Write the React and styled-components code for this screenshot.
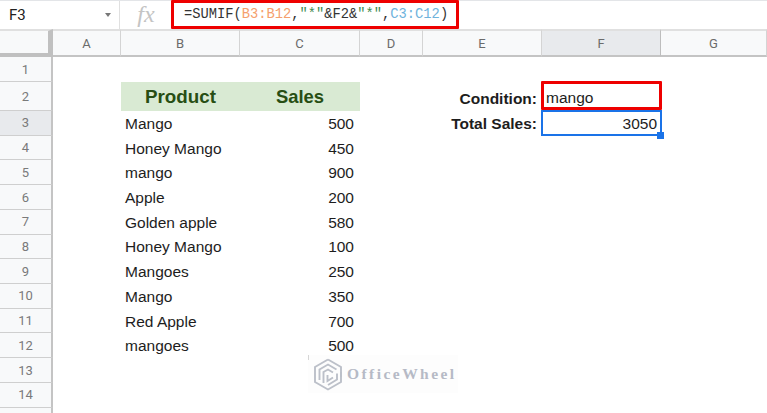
import React from 'react';
import styled, { createGlobalStyle } from 'styled-components';

const GlobalStyle = createGlobalStyle`
  html, body { margin: 0; padding: 0; background: #fff; overflow: hidden; }
  body { font-family: "Liberation Sans", Arial, sans-serif; }
`;

const Page = styled.div`
  width: 767px;
  height: 413px;
  overflow: hidden;
  position: relative;
  background: #fff;
`;

const FormulaBar = styled.div`
  height: 29px;
  box-sizing: border-box;
  border-top: 1px solid #e3e5e8;
  display: flex;
  align-items: center;
  background: #fff;
`;
const NameBox = styled.div`
  width: 120px;
  height: 100%;
  box-sizing: border-box;
  padding-left: 9px;
  display: flex;
  align-items: center;
  justify-content: space-between;
  border-right: 1px solid #e0e0e0;
  font: 15px Roboto, sans-serif;
  color: #222;
`;
const Caret = styled.span`
  width: 0;
  height: 0;
  margin-right: 8px;
  border-left: 3.5px solid transparent;
  border-right: 3.5px solid transparent;
  border-top: 4px solid #777;
`;
const FxLabel = styled.div`
  width: 52px;
  text-align: center;
  font: italic 24px "Liberation Serif", serif;
  color: #c4c4c4;
  margin-top: -2px;
`;
const FormulaBox = styled.div`
  width: 288px;
  height: 29px;
  margin-left: -1px;
  margin-top: -1px;
  box-sizing: border-box;
  border: 3px solid #ee0000;
  border-radius: 1px;
  padding-left: 10px;
  display: flex;
  align-items: center;
  font: 13.75px "Liberation Mono", monospace;
  color: #333;
  white-space: pre;
`;
const Ref = styled.span`
  color: ${p => p.$color};
`;

const Grid = styled.div`
  display: grid;
  grid-template-columns: 53px 68px 119px 120px 63px 119px 119px 106px;
  grid-template-rows: 28px 25px 29px repeat(13, 24.72px);
  font-size: 15.5px;
  color: #1d1d1d;
`;
const Corner = styled.div`
  background: #f8f9fa;
  border-right: 5px solid #c0c0c0;
  border-bottom: 4px solid #c0c0c0;
  border-top: 2px solid #e0e0e0;
`;
const ColHead = styled.div`
  display: flex;
  align-items: center;
  justify-content: center;
  background: ${p => (p.$active ? '#e8eaed' : '#f8f9fa')};
  border-top: 2px solid #e0e0e0;
  border-right: 1px solid ${p => (p.$active ? '#bdbdbd' : '#d4d4d4')};
  border-bottom: 2px solid #c4c4c4;
  box-sizing: border-box;
  font: 13px Roboto, sans-serif;
  color: #6b6b6b;
`;
const RowHead = styled.div`
  display: flex;
  align-items: center;
  justify-content: center;
  background: ${p => (p.$active ? '#e8eaed' : '#f8f9fa')};
  border-right: 2px solid #c4c4c4;
  border-bottom: 1px solid #cfcfcf;
  box-sizing: border-box;
  font: 13px Roboto, sans-serif;
  color: #7a7a7a;
`;
const Cell = styled.div`
  position: relative;
  display: flex;
  align-items: center;
  box-sizing: border-box;
  padding: 1px 5px 0 4px;
  white-space: nowrap;
  justify-content: ${p => (p.$right ? 'flex-end' : 'flex-start')};
  font-weight: ${p => (p.$bold ? 700 : 400)};
`;
const SalesCell = styled(Cell)`
  padding-right: 6px;
`;
const HeaderCell = styled(Cell)`
  justify-content: center;
  padding: 1px 0 0;
  background: #d9ead3;
  color: #274e13;
  font-size: ${p => p.$size}px;
  font-weight: 700;
`;
const LabelCell = styled(Cell)`
  padding-top: 4px;
`;
const RedCell = styled(Cell)`
  padding-top: 3px;
  &::after {
    content: "";
    position: absolute;
    inset: -1px -1px 1px -1px;
    border: 3px solid #ee0000;
    border-radius: 1px;
  }
`;
const ActiveCell = styled(Cell)`
  padding-right: 4px;
  &::before {
    content: "";
    position: absolute;
    inset: -1px -1px 0 -1px;
    border: 2px solid #1a73e8;
  }
  &::after {
    content: "";
    position: absolute;
    right: -3px;
    bottom: -3px;
    width: 7px;
    height: 7px;
    background: #1a73e8;
  }
`;

const Watermark = styled.div`
  position: absolute;
  left: 308px;
  top: 355px;
  width: 150px;
  height: 38px;
  display: flex;
  align-items: center;
  gap: 4px;
  padding-left: 5px;
  box-sizing: border-box;
  background: #fdfdfd;
  &::before {
    content: "";
    position: absolute;
    left: 0;
    top: 0;
    width: 1px;
    height: 5px;
    background: #d6d6d6;
  }
`;
const WatermarkText = styled.span`
  font: 700 15.5px "Liberation Serif", serif;
  letter-spacing: 2.45px;
  color: #b6bac6;
`;

const products = [
  ['Mango', 500],
  ['Honey Mango', 450],
  ['mango', 900],
  ['Apple', 200],
  ['Golden apple', 580],
  ['Honey Mango', 100],
  ['Mangoes', 250],
  ['Mango', 350],
  ['Red Apple', 700],
  ['mangoes', 500],
];
const columns = ['A', 'B', 'C', 'D', 'E', 'F', 'G'];

const Logo = () => (
  <svg width="30" height="33" viewBox="0 0 30 33" fill="none" stroke="#bcc0c9" strokeWidth="1.9">
    <path d="M15 1.5 L28 9 V19" />
    <path d="M28 14 V24 L15 31.5 L2 24 V9 L15 1.5" />
    <path d="M6.5 22 V11.5 L15 6.5 L23.5 11.5" />
    <path d="M10.5 25 V14 L15 11.5 L20 14.5" />
    <path d="M24 15.5 V21.5 L15 27" />
    <path d="M14.5 17 V23 L20 19.5" />
  </svg>
);

const blanks = count => Array.from({ length: count }, (_, i) => <Cell key={i} />);

export default function App() {
  const rows = [];
  for (let n = 1; n <= 15; n++) {
    let cells = blanks(7);
    if (n === 2) {
      cells = (
        <>
          <Cell />
          <HeaderCell $size={18.8}>Product</HeaderCell>
          <HeaderCell $size={18.4}>Sales</HeaderCell>
          <Cell />
          <LabelCell $right $bold>Condition:</LabelCell>
          <RedCell>mango</RedCell>
          <Cell />
        </>
      );
    } else if (n >= 3 && n <= 12) {
      const [name, sales] = products[n - 3];
      cells = (
        <>
          <Cell />
          <Cell>{name}</Cell>
          <SalesCell $right>{sales}</SalesCell>
          <Cell />
          {n === 3 ? <Cell $right $bold>Total Sales:</Cell> : <Cell />}
          {n === 3 ? <ActiveCell $right>3050</ActiveCell> : <Cell />}
          <Cell />
        </>
      );
    }
    rows.push(
      <React.Fragment key={n}>
        {/* row 15 is only a sliver at the bottom edge, its number is not visible */}
        <RowHead $active={n === 3}>{n < 15 ? n : null}</RowHead>
        {cells}
      </React.Fragment>
    );
  }

  return (
    <Page>
      <GlobalStyle />
      <FormulaBar>
        <NameBox>F3<Caret /></NameBox>
        <FxLabel>fx</FxLabel>
        <FormulaBox>
          =SUMIF(<Ref $color="#f5a06d">B3:B12</Ref>,<Ref $color="#3c8a50">"*"</Ref>&F2&<Ref $color="#3c8a50">"*"</Ref>,<Ref $color="#6fb3dc">C3:C12</Ref>)
        </FormulaBox>
      </FormulaBar>
      <Grid>
        <Corner />
        {columns.map(c => <ColHead key={c} $active={c === 'F'}>{c}</ColHead>)}
        {rows}
      </Grid>
      <Watermark>
        <Logo />
        <WatermarkText>OfficeWheel</WatermarkText>
      </Watermark>
    </Page>
  );
}
